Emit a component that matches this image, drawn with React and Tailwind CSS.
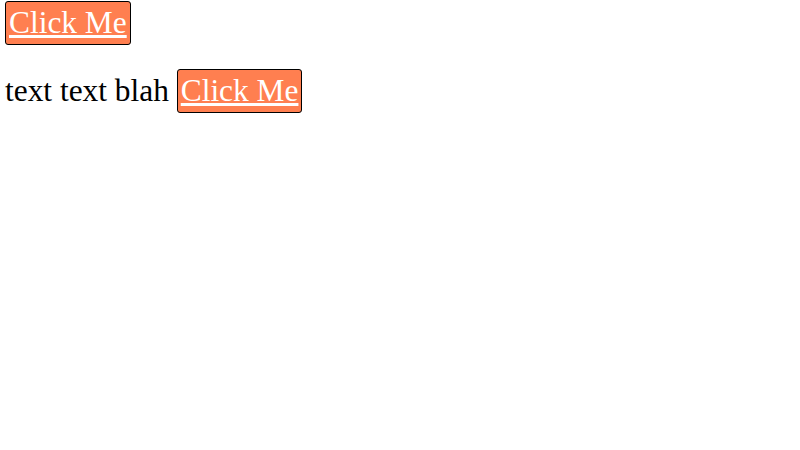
export default function App() {
  const btn =
    "inline-block bg-[#ff7f50] text-white underline border border-black rounded-[3px] px-[3px] py-[3px] leading-[normal]";
  return (
    <div className="min-h-[450px] bg-white text-black pl-[5px] pt-[1px] text-[31.4px] leading-[normal] [font-family:'Liberation_Serif',serif]">
      <div>
        <a href="#" className={btn}>Click Me</a>
      </div>
      <div className="mt-[24px]">
        text text blah <a href="#" className={btn}>Click Me</a>
      </div>
    </div>
  );
}
